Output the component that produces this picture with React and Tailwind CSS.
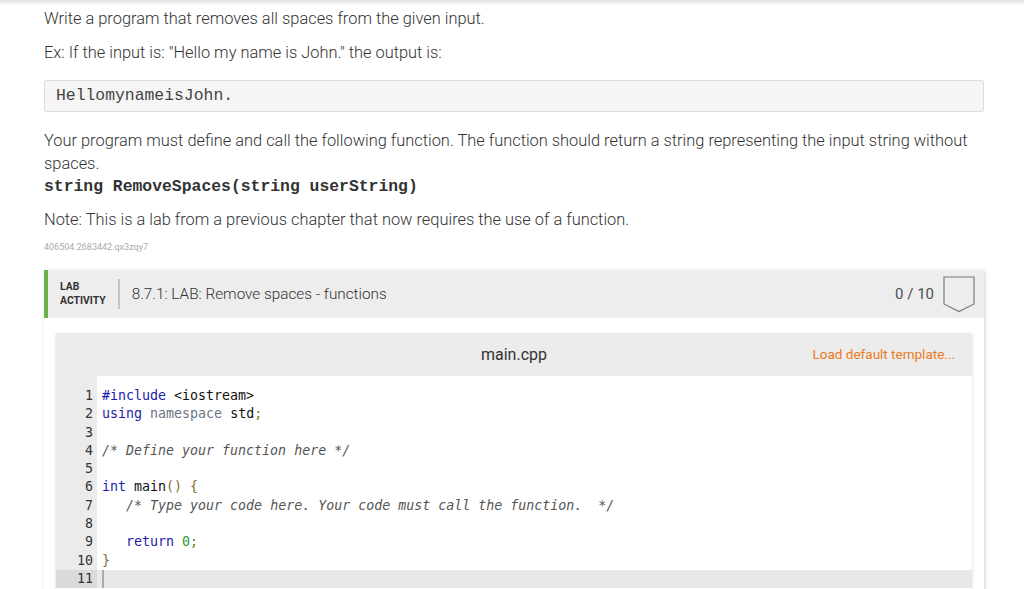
import React from 'react';

const KW = "text-[#1c1ca6]";
const PUN = "text-[#7d6f2c]";
const CMT = "text-[#555] italic";

const codeLines = [
    <><span className={KW}>#include</span> <span className="text-[#111]">&lt;iostream&gt;</span></>,
    <><span className={KW}>using</span> <span className="text-[#6b7387]">namespace</span> <span className="text-[#111]">std</span><span className={PUN}>;</span></>,
    <>&nbsp;</>,
    <><span className={CMT}>/* Define your function here */</span></>,
    <>&nbsp;</>,
    <><span className={KW}>int</span> <span className="text-[#111]">main</span><span className={PUN}>()</span> <span className={PUN}>{'{'}</span></>,
    <>{'   '}<span className={CMT}>/* Type your code here. Your code must call the function.  */</span></>,
    <>&nbsp;</>,
    <>{'   '}<span className={KW}>return</span> <span className="text-[#2e9a2e]">0</span><span className={PUN}>;</span></>,
    <><span className={PUN}>{'}'}</span></>,
    null,
];

const Badge = () => (
    <svg width="32" height="37" viewBox="0 0 32 37" className="shrink-0">
        <path d="M1 1 H31 V28 L16 35.5 L1 28 Z" fill="none" stroke="#7a7a7a" strokeWidth="1.2" />
    </svg>
);

export default function App() {
    return (
        <div className="relative w-[1024px] h-[589px] overflow-hidden bg-white text-[#333]" style={{ fontFamily: 'Roboto, "Noto Sans", sans-serif' }}>
            {/* ── sombra de la barra superior ── */}
            <div className="absolute top-0 left-0 right-0 h-[6px] bg-gradient-to-b from-[#e2e2e2] to-white" />

            <div className="pl-[44px] pt-[7px] w-[984px] font-light">
                <p className="text-[16.4px] leading-[23px]">Write a program that removes all spaces from the given input.</p>
                <p className="mt-[11px] text-[16.4px] leading-[23px]">Ex: If the input is: "Hello my name is John." the output is:</p>

                <div className="mt-[16px] h-[32px] flex items-center pl-[11px] bg-[#f5f5f5] border border-[#dcdcdc] rounded-[2px] text-[16.4px] font-normal text-[#444]" style={{ fontFamily: '"Liberation Mono", monospace' }}>
                    HellomynameisJohn.
                </div>

                <p className="mt-[17px] text-[16.4px] leading-[23px]">
                    Your program must define and call the following function. The function should return a string representing the input string without spaces.
                </p>
                <p className="text-[16.4px] leading-[23px] font-bold text-[#333]" style={{ fontFamily: '"Liberation Mono", monospace' }}>
                    string RemoveSpaces(string userString)
                </p>
                <p className="mt-[10px] text-[16.4px] leading-[23px]">Note: This is a lab from a previous chapter that now requires the use of a function.</p>
                <p className="mt-[10px] text-[9px] leading-[12px] text-[#aaa] font-normal">406504.2683442.qx3zqy7</p>

                {/* ── panel de actividad ── */}
                <div className="mt-[17px] w-[940px] bg-white shadow-[1px_1px_4px_rgba(0,0,0,0.18)]">
                    <div className="h-[48px] flex items-center bg-[#ededed] border-l-4 border-[#6ab04c] pl-[12px] pr-[9px]">
                        <div className="text-[10.4px] leading-[14px] font-bold text-[#333]">
                            <div>LAB</div>
                            <div>ACTIVITY</div>
                        </div>
                        <div className="ml-[12px] w-[2px] h-[30px] bg-[#c4c4c4]" />
                        <div className="ml-[12px] text-[15.3px] font-light text-[#333]">8.7.1: LAB: Remove spaces - functions</div>
                        <div className="ml-auto flex items-center gap-[9px]">
                            <span className="text-[15px] font-normal text-[#4a4f55]">0 / 10</span>
                            <Badge />
                        </div>
                    </div>

                    <div className="px-[12px] pt-[15px]">
                        <div className="shadow-[0_1px_3px_rgba(0,0,0,0.15)]">
                            <div className="relative h-[43px] bg-[#ececec] flex items-center justify-center">
                                <span className="text-[16px] font-normal text-[#333]">main.cpp</span>
                                <span className="absolute right-[17px] text-[13.5px] font-normal text-[#ea7a1e]">Load default template...</span>
                            </div>
                            <div className="flex bg-white text-[13.3px] leading-[18.3px] pb-[40px]" style={{ fontFamily: '"DejaVu Sans Mono", monospace' }}>
                                <div className="w-[41px] bg-[#ebebeb] pt-[11px] text-right font-normal text-[#333]">
                                    {codeLines.map((_, i) => (
                                        <div key={i} className={i === 10 ? "bg-[#dadada] pr-[4px]" : "pr-[4px]"}>{i + 1}</div>
                                    ))}
                                </div>
                                <div className="flex-1 pt-[11px] font-normal">
                                    {codeLines.map((line, i) => (
                                        <div key={i} className={i === 10 ? "bg-[#e8e8e8] pl-[5px] whitespace-pre" : "pl-[5px] whitespace-pre"}>
                                            {i === 10 ? <span className="inline-block w-[2px] h-[18px] align-top bg-[#aaa]" /> : line}
                                        </div>
                                    ))}
                                </div>
                            </div>
                        </div>
                    </div>
                </div>
            </div>
        </div>
    );
}
